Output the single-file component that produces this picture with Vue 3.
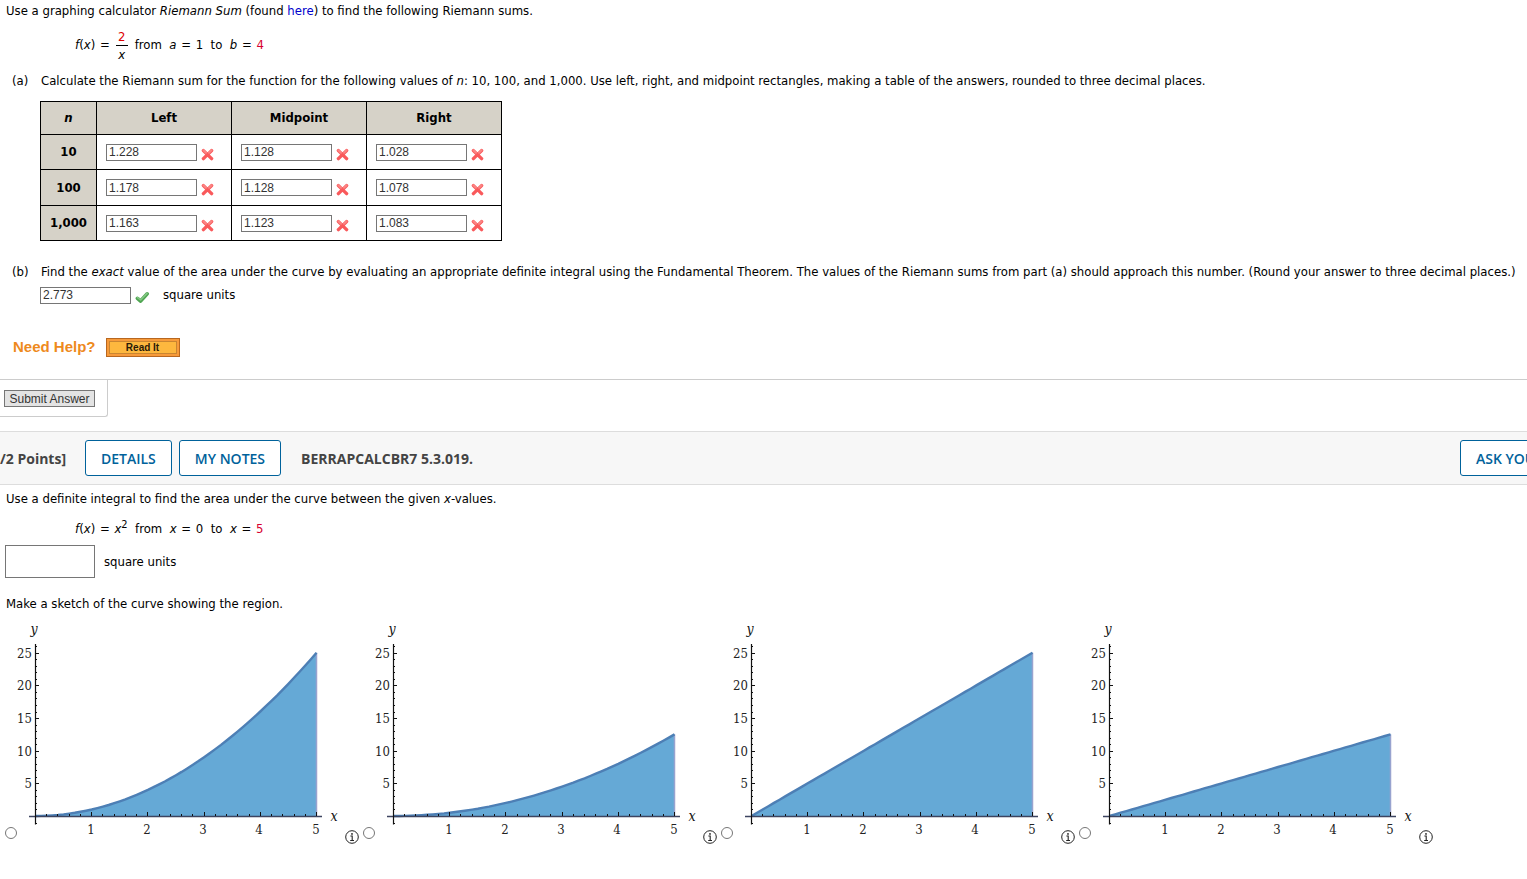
<script setup>
import { reactive, ref } from 'vue'

const columns = ['Left', 'Midpoint', 'Right']
const rows = reactive([
  { n: '10', values: ['1.228', '1.128', '1.028'] },
  { n: '100', values: ['1.178', '1.128', '1.078'] },
  { n: '1,000', values: ['1.163', '1.123', '1.083'] },
])
const exactArea = ref('2.773')
const definiteArea = ref('')
const sketch = ref('')

const origin = { x: 18.5, y: 196 }
const px = (x) => origin.x + x * 56.2
const py = (y) => origin.y - y * 6.53

const functions = [
  { id: 'square', label: 'y = x squared', f: (x) => x * x },
  { id: 'half-square', label: 'y = half x squared', f: (x) => (x * x) / 2 },
  { id: 'line-five', label: 'y = 5x', f: (x) => 5 * x },
  { id: 'line-half', label: 'y = 2.5x', f: (x) => 2.5 * x },
]
const samples = Array.from({ length: 51 }, (_, i) => i / 10)
const graphs = functions.map(({ id, label, f }) => {
  const curve = samples.map((x) => `${px(x).toFixed(1)},${py(f(x)).toFixed(1)}`).join(' ')
  return {
    id,
    label,
    curve,
    area: `${curve} ${px(5)},${origin.y} ${origin.x},${origin.y}`,
    top: py(f(5)),
  }
})

const xTicks = Array.from({ length: 25 }, (_, i) => i + 1)
const yTicks = Array.from({ length: 28 }, (_, i) => i - 1).filter((v) => v !== 0)
const tickPath = [
  ...xTicks.map((i) => `M${Math.floor(px(i / 5)) + 0.5} ${origin.y}v${i % 5 ? -2 : -4}`),
  ...yTicks.map((v) => `M${origin.x} ${Math.round(py(v)) + 0.5}h${v % 5 ? 1.5 : 3.5}`),
].join('')
</script>

<template>
  <main class="page">
    <section class="question">
      <p>Use a graphing calculator <i>Riemann Sum</i> (found <a href="#">here</a>) to find the following Riemann sums.</p>
      <div class="formula fraction-line">
        <span><i>f</i>(<i>x</i>) <span class="eq">=</span></span>
        <span class="fraction"><span class="red">2</span><i>x</i></span>
        <span>from &nbsp;<i>a</i> <span class="eq">=</span> 1 &nbsp;to &nbsp;<i>b</i> <span class="eq">=</span> <span class="pink">4</span></span>
      </div>

      <div class="part">
        <span class="mark">(a)</span>
        <div>
          <p>Calculate the Riemann sum for the function for the following values of <i>n</i>: 10, 100, and 1,000. Use left, right, and midpoint rectangles, making a table of the answers, rounded to three decimal places.</p>
          <table>
            <thead>
              <tr>
                <th scope="col" class="n-col"><i>n</i></th>
                <th v-for="c in columns" :key="c" scope="col">{{ c }}</th>
              </tr>
            </thead>
            <tbody>
              <tr v-for="row in rows" :key="row.n">
                <th scope="row">{{ row.n }}</th>
                <td v-for="(c, i) in columns" :key="c">
                  <div class="answer">
                    <input v-model="row.values[i]" type="text" class="field" :aria-label="`${c}, n = ${row.n}`" />
                    <svg class="cross" width="13" height="13" viewBox="0 0 13 13" role="img" aria-label="Incorrect">
                      <path d="M2.4 2.6L10.6 10.6M10.6 2.6L2.4 10.6" stroke="#f9595b" stroke-width="3.4" stroke-linecap="round" />
                      <path d="M2.4 2.3L5 4.8M10.6 2.3L8 4.8" stroke="#fb8584" stroke-width="2" stroke-linecap="round" />
                    </svg>
                  </div>
                </td>
              </tr>
            </tbody>
          </table>
        </div>
      </div>

      <div class="part part-b">
        <span class="mark">(b)</span>
        <div>
          <p>Find the <i>exact</i> value of the area under the curve by evaluating an appropriate definite integral using the Fundamental Theorem. The values of the Riemann sums from part (a) should approach this number. (Round your answer to three decimal places.)</p>
          <div class="answer exact">
            <input id="exact" v-model="exactArea" type="text" class="field" />
            <svg class="check" width="15" height="13" viewBox="0 0 15 13" role="img" aria-label="Correct">
              <path d="M2.4 7.3L5.6 10L12.2 2.8" fill="none" stroke="#4fa552" stroke-width="3.6" stroke-linejoin="round" stroke-linecap="round" />
              <path d="M2.6 6.6L5.6 9L12 2.4" fill="none" stroke="#83c783" stroke-width="1.6" stroke-linejoin="round" stroke-linecap="round" />
            </svg>
            <label for="exact">square units</label>
          </div>
        </div>
      </div>

      <div class="help">
        <span class="help-title">Need Help?</span>
        <button type="button" class="read">Read It</button>
      </div>
    </section>

    <div class="submit-row">
      <div class="submit-box"><button type="button" class="submit">Submit Answer</button></div>
    </div>

    <header class="bar">
      <strong class="points">/2 Points]</strong>
      <button type="button" class="outline">DETAILS</button>
      <button type="button" class="outline">MY NOTES</button>
      <strong class="code">BERRAPCALCBR7 5.3.019.</strong>
      <div class="ask"><button type="button" class="outline">ASK YOUR TEACHER</button></div>
    </header>

    <section class="question second">
      <p>Use a definite integral to find the area under the curve between the given <i>x</i>-values.</p>
      <div class="formula power-line"><i>f</i>(<i>x</i>) <span class="eq">=</span> <i>x</i><sup>2</sup> &nbsp;from &nbsp;<i>x</i> <span class="eq">=</span> 0 &nbsp;to &nbsp;<i>x</i> <span class="eq">=</span> <span class="pink">5</span></div>
      <div class="area-row">
        <input id="area" v-model="definiteArea" type="text" class="big-field" />
        <label for="area">square units</label>
      </div>
      <p>Make a sketch of the curve showing the region.</p>

      <div class="choices" role="radiogroup" aria-label="Sketch of the curve">
        <div v-for="g in graphs" :key="g.id" class="choice">
          <input :id="g.id" v-model="sketch" type="radio" name="sketch" :value="g.id" />
          <label :for="g.id">
            <svg class="graph" width="328" height="224" viewBox="0 0 328 224" role="img" :aria-label="g.label">
              <polygon :points="g.area" fill="#65a9d6" />
              <path :d="`M299.5 ${g.top}V196`" stroke="#98a3cf" stroke-width="1.5" />
              <polyline :points="g.curve" fill="none" stroke="#4d7fb5" stroke-width="2.4" />
              <path d="M12 196.5H305" stroke="#3d4460" stroke-width="1.4" />
              <path d="M18.5 24V204.5" stroke="#111" stroke-width="1.2" />
              <path :d="tickPath" stroke="#111" stroke-width="1" />
              <text v-for="v in [5, 10, 15, 20, 25]" :key="v" x="15" :y="Math.round(py(v)) + 5" text-anchor="end">{{ v }}</text>
              <text v-for="v in [1, 2, 3, 4, 5]" :key="v" :x="Math.round(px(v)) - 1" y="214" text-anchor="middle">{{ v }}</text>
              <text class="axis" x="17" y="14" text-anchor="middle">y</text>
              <text class="axis" x="317" y="201" text-anchor="middle">x</text>
            </svg>
          </label>
          <button type="button" class="info" aria-label="Graph description">
            <svg width="14" height="14" viewBox="0 0 14 14">
              <circle cx="7" cy="7" r="6.3" fill="none" stroke="#222" stroke-width="1" />
              <circle cx="7" cy="3.9" r="0.9" fill="#222" />
              <path d="M5.4 6H7.2V10.3M5.2 10.5H9" fill="none" stroke="#222" stroke-width="1.1" />
            </svg>
          </button>
        </div>
      </div>
    </section>
  </main>
</template>

<style>
body {
  margin: 0;
  background: #fff;
  overflow-x: hidden;
}
</style>

<style scoped>
.page {
  font: 13px/18px "DejaVu Sans Condensed", Tahoma, Verdana, sans-serif;
  color: #000;
  white-space: nowrap;
  overflow: hidden;
}
.page *,
.page {
  box-sizing: border-box;
}
p {
  margin: 0;
  padding-left: 1px;
}
.question {
  padding: 2px 0 0 5px;
}
a {
  color: #00c;
  text-decoration: none;
}
.red {
  color: #d00;
}
.pink {
  color: #d7002f;
}
.eq {
  margin: 0 1px;
}
.formula {
  padding-left: 70px;
}
.fraction-line {
  display: flex;
  align-items: center;
  gap: 5px;
  height: 34px;
  margin-top: 8px;
}
.fraction {
  display: grid;
  justify-items: center;
  width: 12px;
  margin-right: 2px;
  line-height: 17px;
}
.fraction .red {
  width: 100%;
  text-align: center;
  border-bottom: 1px solid #000;
}
.part {
  display: flex;
  margin-top: 10px;
}
.mark {
  flex: none;
  width: 35px;
  padding-left: 7px;
}
table {
  margin-top: 11px;
  border-collapse: collapse;
}
th,
td {
  border: 1px solid #000;
  padding: 0 9px;
}
th {
  width: 135px;
  height: 33px;
  background: #d6d2c8;
}
tbody th,
.n-col {
  width: 56px;
  padding: 0;
}
td {
  height: 35px;
}
tbody tr:nth-child(2) td {
  height: 36px;
}
.answer {
  display: flex;
  align-items: center;
}
.field {
  width: 91px;
  height: 17px;
  padding: 0 2px;
  border: 1px solid #767676;
  border-radius: 0;
  background: #fff;
  color: #333;
  font: 12px "Liberation Sans", Arial, sans-serif;
}
.cross {
  margin: 4px 0 0 4px;
}
.part-b {
  margin-top: 22px;
}
.exact {
  margin-top: 5px;
}
.check {
  margin: 4px 13px 0 4px;
}
.help {
  display: flex;
  align-items: center;
  gap: 10px;
  margin: 33px 0 0 8px;
}
.help-title {
  color: #ee8a1d;
  font: bold 15px/20px "Liberation Sans", Arial, sans-serif;
}
.read {
  width: 74px;
  height: 19px;
  padding: 0;
  border: 1px solid #b8671f;
  background: #fdb73e;
  box-shadow: inset 0 0 0 2px #f79a3a, inset 0 0 0 3px #c98531;
  color: #2a1a08;
  font: bold 10px "Liberation Sans", Arial, sans-serif;
}
.submit-row {
  margin-top: 22px;
  border-top: 1px solid #ccc;
}
.submit-box {
  display: flex;
  width: 108px;
  height: 37px;
  padding: 10px 0 0 4px;
  border: solid #ccc;
  border-width: 0 1px 1px 0;
  border-bottom-right-radius: 3px;
}
.submit {
  width: 91px;
  height: 17px;
  padding: 0;
  border: 1px solid #767676;
  background: #e3e3e3;
  color: #333;
  font: 12px "Liberation Sans", Arial, sans-serif;
}
.bar {
  display: flex;
  align-items: center;
  height: 54px;
  margin-top: 14px;
  border: solid #ddd;
  border-width: 1px 0;
  background: #f7f7f7;
  color: #444;
  font: 14px "Open Sans", sans-serif;
}
.points {
  width: 85px;
}
.outline {
  height: 36px;
  margin-right: 7px;
  padding: 0 15px;
  border: 1px solid #00629b;
  border-radius: 3px;
  background: #fff;
  color: #00629b;
  font: 600 14px "Open Sans", sans-serif;
}
.code {
  margin-left: 13px;
}
.ask {
  width: 67px;
  margin-left: auto;
  overflow: hidden;
}
.second {
  padding-top: 5px;
}
.power-line {
  margin-top: 12px;
}
sup {
  font-size: 11px;
  line-height: 0;
}
.area-row {
  display: flex;
  align-items: center;
  gap: 9px;
  margin: 7px 0 17px;
}
.big-field {
  width: 90px;
  height: 33px;
  padding: 0 4px;
  border: 1px solid #767676;
  font: 13px "Liberation Sans", Arial, sans-serif;
}
.choices {
  display: flex;
  margin-top: 7px;
}
.choice {
  display: flex;
  align-items: flex-end;
  width: 358px;
}
.choice input {
  width: 12px;
  height: 12px;
  margin: 0 0 5px;
}
.graph {
  display: block;
}
.graph text {
  fill: #222;
  font: 13px "DejaVu Serif Condensed", serif;
}
.graph .axis {
  fill: #111;
  font: italic 14px "DejaVu Serif Condensed", serif;
}
.info {
  display: flex;
  padding: 0;
  border: 0;
  background: none;
}
</style>
